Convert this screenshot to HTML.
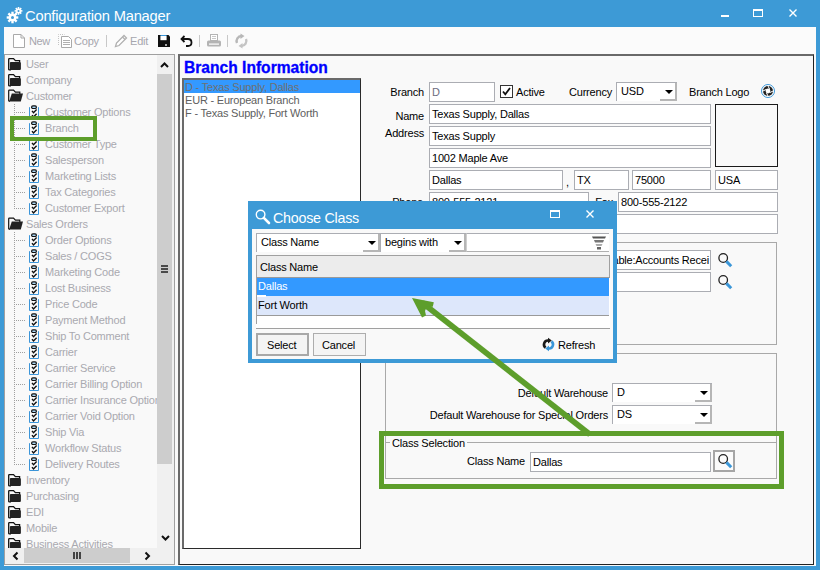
<!DOCTYPE html>
<html><head><meta charset="utf-8">
<style>
*{margin:0;padding:0;box-sizing:border-box}
html,body{width:820px;height:570px;overflow:hidden}
body{position:relative;background:#3d9ad6;font-family:"Liberation Sans",sans-serif;font-size:11px;color:#000;letter-spacing:-0.2px}
.a{position:absolute}
.t{position:absolute;white-space:nowrap;line-height:16px}
svg{position:absolute;overflow:visible}
.tree .t{color:#a9a9b0}
.inp{position:absolute;background:#fff;border:1px solid #abadb3}
.inp span{position:absolute;left:2px;top:1px;line-height:16px;white-space:nowrap;color:#000}
.lbl{position:absolute;white-space:nowrap;line-height:16px}
.cmb{position:absolute;background:#fff;border-top:1px solid #abadb3;border-left:1px solid #abadb3}
.cmb span{position:absolute;left:4px;top:0px;line-height:16px;white-space:nowrap}
.cmb i{position:absolute;right:0;top:0;width:17px;bottom:0;border-right:2px solid #b6b6b6;border-bottom:2px solid #b6b6b6}
.cmb i:after{content:"";position:absolute;left:4.5px;top:6.5px;border-left:4px solid transparent;border-right:4px solid transparent;border-top:4.5px solid #000}
.tb{position:absolute;white-space:nowrap;line-height:16px;color:#a6a6ae;font-size:12px}
</style></head><body>
<svg width="0" height="0" style="position:absolute">
<defs>
<symbol id="fc" viewBox="0 0 16 16">
  <path d="M0.7 13.2V3.2Q0.7 2.6 1.3 2.6H5.5L7.4 4.6H11.6V6" fill="none" stroke="#111" stroke-width="1.3"/>
  <rect x="1.9" y="5.9" width="11" height="8" rx="1" fill="#222"/>
  <path d="M0.7 13V13.3Q0.7 13.9 1.5 13.9H3" stroke="#111" stroke-width="1.3" fill="none"/>
</symbol>
<symbol id="fo" viewBox="0 0 16 16">
  <path d="M0.7 13.2V2.8Q0.7 2.2 1.3 2.2H5.5L7.4 4.2H11.8V6M0.7 13.2H2" fill="none" stroke="#111" stroke-width="1.2"/>
  <path d="M3.8 5.6H15L12.8 13.6H1.2Z" fill="#222"/>
</symbol>
<symbol id="cb" viewBox="0 0 11 16">
  <path d="M0.5 3.2V14.5H9.5V3.2" fill="none" stroke="#3b95d9" stroke-width="1"/>
  <rect x="2.6" y="1.9" width="4.8" height="2.6" rx="1.3" fill="#a8d4f2" stroke="#111" stroke-width="1.2"/>
  <path d="M3 6.9L4.5 8.7L7.6 5.6M3 11.1L4.5 12.9L7.6 9.8" fill="none" stroke="#111" stroke-width="1.4"/>
</symbol>
<symbol id="mag" viewBox="0 0 16 16">
  <circle cx="5.2" cy="5" r="4.3" fill="none" stroke="#222" stroke-width="1.3"/>
  <path d="M8.4 8.4L13.2 13.2" stroke="#3a96d8" stroke-width="3"/>
</symbol>
</defs></svg>
<!-- title bar -->
<svg style="left:7px;top:7px" width="16" height="17" viewBox="0 0 16 17">
  <g fill="#fff">
    <circle cx="5.5" cy="10.5" r="3.8"/>
    <g transform="translate(5.5 10.5)">
      <rect x="-1.2" y="-5.8" width="2.4" height="11.6"/>
      <rect x="-1.2" y="-5.8" width="2.4" height="11.6" transform="rotate(45)"/>
      <rect x="-1.2" y="-5.8" width="2.4" height="11.6" transform="rotate(90)"/>
      <rect x="-1.2" y="-5.8" width="2.4" height="11.6" transform="rotate(135)"/>
    </g>
    <circle cx="11.5" cy="3.9" r="2.5"/>
    <g transform="translate(11.5 3.9)">
      <rect x="-0.8" y="-3.9" width="1.6" height="7.8"/>
      <rect x="-0.8" y="-3.9" width="1.6" height="7.8" transform="rotate(45)"/>
      <rect x="-0.8" y="-3.9" width="1.6" height="7.8" transform="rotate(90)"/>
      <rect x="-0.8" y="-3.9" width="1.6" height="7.8" transform="rotate(135)"/>
    </g>
  </g>
  <circle cx="5.5" cy="10.5" r="1.5" fill="#3d9ad6"/>
  <circle cx="11.5" cy="3.9" r="1" fill="#3d9ad6"/>
</svg>
<div class="t" style="left:25px;top:7px;font-size:14.7px;line-height:19px;color:#fff;letter-spacing:-0.2px">Configuration Manager</div>
<div class="a" style="left:721px;top:15px;width:8px;height:2px;background:#fff"></div>
<div class="a" style="left:753px;top:9px;width:10px;height:8px;border:1px solid #fff;border-top-width:2px"></div>
<svg style="left:789px;top:9px" width="8" height="8" viewBox="0 0 8 8"><path d="M0.5 0.5L7.5 7.5M7.5 0.5L0.5 7.5" stroke="#fff" stroke-width="1.4"/></svg>

<!-- client -->
<div class="a" style="left:4px;top:27px;width:812px;height:539px;background:#f9f9f9"></div>
<!-- toolbar -->
<div class="a" style="left:4px;top:27px;width:812px;height:27px;background:#fbfbfb"></div>
<svg style="left:13px;top:34px" width="12" height="14" viewBox="0 0 12 14"><path d="M0.5 0.5H8L11.5 4V13.5H0.5Z" fill="#fff" stroke="#a9a9a9"/><path d="M8 0.5V4H11.5" fill="none" stroke="#a9a9a9"/></svg>
<div class="tb" style="left:29px;top:33px;font-size:11px;letter-spacing:-0.4px">New</div>
<svg style="left:58px;top:34px" width="15" height="15" viewBox="0 0 15 15"><path d="M0.5 11V0.5H6.5" fill="none" stroke="#c4c4c4" stroke-dasharray="1 1"/><path d="M3.5 2.5H10.5L13.5 5.5V13.5H3.5Z" fill="#fff" stroke="#a9a9a9"/><path d="M5 6.5H12M5 8.5H12M5 10.5H12" stroke="#b0b0b0"/></svg>
<div class="tb" style="left:74px;top:33px;font-size:11px;letter-spacing:-0.2px">Copy</div>
<div class="a" style="left:106px;top:35px;width:1px;height:12px;background:#c8c8c8"></div>
<svg style="left:114px;top:34px" width="14" height="14" viewBox="0 0 14 14"><path d="M1.5 12.5L2.5 9L10 1.5L12.5 4L5 11.5Z" fill="#fff" stroke="#b0b0b0" stroke-width="1.3"/><path d="M8.5 3L11 5.5" stroke="#b0b0b0" stroke-width="1.2"/></svg>
<div class="tb" style="left:130px;top:33px;font-size:11px;letter-spacing:-0.2px">Edit</div>
<svg style="left:158px;top:35px" width="12" height="12" viewBox="0 0 12 12"><path d="M0 0H10.5L12 1.5V12H0Z" fill="#111"/><rect x="2.4" y="1" width="6.2" height="4.2" fill="#fff"/><rect x="2.4" y="0" width="6.2" height="1" fill="#3a96d8"/><rect x="7.2" y="9.2" width="1.6" height="1.6" fill="#fff"/></svg>
<svg style="left:180px;top:35px" width="13" height="12" viewBox="0 0 13 12"><path d="M4.5 1L1.5 4L4.5 7" fill="none" stroke="#111" stroke-width="1.8"/><path d="M1.8 4H8Q11.5 4 11.5 7.5Q11.5 11 8 11H6" fill="none" stroke="#111" stroke-width="1.8"/></svg>
<div class="a" style="left:199px;top:35px;width:1px;height:12px;background:#c8c8c8"></div>
<svg style="left:207px;top:34px" width="14" height="14" viewBox="0 0 14 14"><rect x="3.5" y="0.5" width="7" height="6" fill="#fff" stroke="#b4b4b4"/><path d="M5 2.5H9M5 4.5H9" stroke="#c8c8c8"/><rect x="0" y="6.5" width="14" height="6" rx="1.5" fill="#b4b4b4"/><rect x="2" y="9.5" width="10" height="1.2" fill="#fff"/></svg>
<div class="a" style="left:227px;top:35px;width:1px;height:12px;background:#c8c8c8"></div>
<svg style="left:235px;top:34px" width="13" height="14" viewBox="0 0 13 14"><path d="M6.5 2A5 5 0 0 0 2 9" fill="none" stroke="#b8b8b8" stroke-width="2.4"/><path d="M6.5 12A5 5 0 0 0 11 5" fill="none" stroke="#c4c4c4" stroke-width="2.4"/><path d="M5.5 -0.5L9.5 2L5.5 5Z" fill="#b8b8b8"/><path d="M7.5 14.5L3.5 12L7.5 9Z" fill="#c4c4c4"/></svg>

<!-- tree panel -->
<div class="a" style="left:4px;top:54px;width:171px;height:511px;border:1px solid #a0a0a0;background:#f9f9f9"></div>
<div class="tree">
<div class="a" style="left:14px;top:232px;width:1px;height:233px;background:repeating-linear-gradient(#a0a0a0 0 1px,transparent 1px 2px)"></div>
<div class="a" style="left:14px;top:104px;width:1px;height:105px;background:repeating-linear-gradient(#a0a0a0 0 1px,transparent 1px 2px)"></div>
<svg style="left:8px;top:56px" width="16" height="16"><use href="#fc"/></svg>
<div class="t" style="left:26px;top:56px">User</div>
<svg style="left:8px;top:72px" width="16" height="16"><use href="#fc"/></svg>
<div class="t" style="left:26px;top:72px">Company</div>
<svg style="left:8px;top:88px" width="16" height="16"><use href="#fo"/></svg>
<div class="t" style="left:26px;top:88px">Customer</div>
<div class="a" style="left:16px;top:112px;width:9px;height:1px;background:repeating-linear-gradient(90deg,#a0a0a0 0 1px,transparent 1px 2px)"></div>
<svg style="left:29px;top:104px" width="11" height="16"><use href="#cb"/></svg>
<div class="t" style="left:45px;top:104px">Customer Options</div>
<div class="a" style="left:16px;top:128px;width:9px;height:1px;background:repeating-linear-gradient(90deg,#a0a0a0 0 1px,transparent 1px 2px)"></div>
<svg style="left:29px;top:120px" width="11" height="16"><use href="#cb"/></svg>
<div class="t" style="left:45px;top:120px">Branch</div>
<div class="a" style="left:16px;top:144px;width:9px;height:1px;background:repeating-linear-gradient(90deg,#a0a0a0 0 1px,transparent 1px 2px)"></div>
<svg style="left:29px;top:136px" width="11" height="16"><use href="#cb"/></svg>
<div class="t" style="left:45px;top:136px">Customer Type</div>
<div class="a" style="left:16px;top:160px;width:9px;height:1px;background:repeating-linear-gradient(90deg,#a0a0a0 0 1px,transparent 1px 2px)"></div>
<svg style="left:29px;top:152px" width="11" height="16"><use href="#cb"/></svg>
<div class="t" style="left:45px;top:152px">Salesperson</div>
<div class="a" style="left:16px;top:176px;width:9px;height:1px;background:repeating-linear-gradient(90deg,#a0a0a0 0 1px,transparent 1px 2px)"></div>
<svg style="left:29px;top:168px" width="11" height="16"><use href="#cb"/></svg>
<div class="t" style="left:45px;top:168px">Marketing Lists</div>
<div class="a" style="left:16px;top:192px;width:9px;height:1px;background:repeating-linear-gradient(90deg,#a0a0a0 0 1px,transparent 1px 2px)"></div>
<svg style="left:29px;top:184px" width="11" height="16"><use href="#cb"/></svg>
<div class="t" style="left:45px;top:184px">Tax Categories</div>
<div class="a" style="left:16px;top:208px;width:9px;height:1px;background:repeating-linear-gradient(90deg,#a0a0a0 0 1px,transparent 1px 2px)"></div>
<svg style="left:29px;top:200px" width="11" height="16"><use href="#cb"/></svg>
<div class="t" style="left:45px;top:200px">Customer Export</div>
<svg style="left:8px;top:216px" width="16" height="16"><use href="#fo"/></svg>
<div class="t" style="left:26px;top:216px">Sales Orders</div>
<div class="a" style="left:16px;top:240px;width:9px;height:1px;background:repeating-linear-gradient(90deg,#a0a0a0 0 1px,transparent 1px 2px)"></div>
<svg style="left:29px;top:232px" width="11" height="16"><use href="#cb"/></svg>
<div class="t" style="left:45px;top:232px">Order Options</div>
<div class="a" style="left:16px;top:256px;width:9px;height:1px;background:repeating-linear-gradient(90deg,#a0a0a0 0 1px,transparent 1px 2px)"></div>
<svg style="left:29px;top:248px" width="11" height="16"><use href="#cb"/></svg>
<div class="t" style="left:45px;top:248px">Sales / COGS</div>
<div class="a" style="left:16px;top:272px;width:9px;height:1px;background:repeating-linear-gradient(90deg,#a0a0a0 0 1px,transparent 1px 2px)"></div>
<svg style="left:29px;top:264px" width="11" height="16"><use href="#cb"/></svg>
<div class="t" style="left:45px;top:264px">Marketing Code</div>
<div class="a" style="left:16px;top:288px;width:9px;height:1px;background:repeating-linear-gradient(90deg,#a0a0a0 0 1px,transparent 1px 2px)"></div>
<svg style="left:29px;top:280px" width="11" height="16"><use href="#cb"/></svg>
<div class="t" style="left:45px;top:280px">Lost Business</div>
<div class="a" style="left:16px;top:304px;width:9px;height:1px;background:repeating-linear-gradient(90deg,#a0a0a0 0 1px,transparent 1px 2px)"></div>
<svg style="left:29px;top:296px" width="11" height="16"><use href="#cb"/></svg>
<div class="t" style="left:45px;top:296px">Price Code</div>
<div class="a" style="left:16px;top:320px;width:9px;height:1px;background:repeating-linear-gradient(90deg,#a0a0a0 0 1px,transparent 1px 2px)"></div>
<svg style="left:29px;top:312px" width="11" height="16"><use href="#cb"/></svg>
<div class="t" style="left:45px;top:312px">Payment Method</div>
<div class="a" style="left:16px;top:336px;width:9px;height:1px;background:repeating-linear-gradient(90deg,#a0a0a0 0 1px,transparent 1px 2px)"></div>
<svg style="left:29px;top:328px" width="11" height="16"><use href="#cb"/></svg>
<div class="t" style="left:45px;top:328px">Ship To Comment</div>
<div class="a" style="left:16px;top:352px;width:9px;height:1px;background:repeating-linear-gradient(90deg,#a0a0a0 0 1px,transparent 1px 2px)"></div>
<svg style="left:29px;top:344px" width="11" height="16"><use href="#cb"/></svg>
<div class="t" style="left:45px;top:344px">Carrier</div>
<div class="a" style="left:16px;top:368px;width:9px;height:1px;background:repeating-linear-gradient(90deg,#a0a0a0 0 1px,transparent 1px 2px)"></div>
<svg style="left:29px;top:360px" width="11" height="16"><use href="#cb"/></svg>
<div class="t" style="left:45px;top:360px">Carrier Service</div>
<div class="a" style="left:16px;top:384px;width:9px;height:1px;background:repeating-linear-gradient(90deg,#a0a0a0 0 1px,transparent 1px 2px)"></div>
<svg style="left:29px;top:376px" width="11" height="16"><use href="#cb"/></svg>
<div class="t" style="left:45px;top:376px">Carrier Billing Option</div>
<div class="a" style="left:16px;top:400px;width:9px;height:1px;background:repeating-linear-gradient(90deg,#a0a0a0 0 1px,transparent 1px 2px)"></div>
<svg style="left:29px;top:392px" width="11" height="16"><use href="#cb"/></svg>
<div class="t" style="left:45px;top:392px">Carrier Insurance Option</div>
<div class="a" style="left:16px;top:416px;width:9px;height:1px;background:repeating-linear-gradient(90deg,#a0a0a0 0 1px,transparent 1px 2px)"></div>
<svg style="left:29px;top:408px" width="11" height="16"><use href="#cb"/></svg>
<div class="t" style="left:45px;top:408px">Carrier Void Option</div>
<div class="a" style="left:16px;top:432px;width:9px;height:1px;background:repeating-linear-gradient(90deg,#a0a0a0 0 1px,transparent 1px 2px)"></div>
<svg style="left:29px;top:424px" width="11" height="16"><use href="#cb"/></svg>
<div class="t" style="left:45px;top:424px">Ship Via</div>
<div class="a" style="left:16px;top:448px;width:9px;height:1px;background:repeating-linear-gradient(90deg,#a0a0a0 0 1px,transparent 1px 2px)"></div>
<svg style="left:29px;top:440px" width="11" height="16"><use href="#cb"/></svg>
<div class="t" style="left:45px;top:440px">Workflow Status</div>
<div class="a" style="left:16px;top:464px;width:9px;height:1px;background:repeating-linear-gradient(90deg,#a0a0a0 0 1px,transparent 1px 2px)"></div>
<svg style="left:29px;top:456px" width="11" height="16"><use href="#cb"/></svg>
<div class="t" style="left:45px;top:456px">Delivery Routes</div>
<svg style="left:8px;top:472px" width="16" height="16"><use href="#fc"/></svg>
<div class="t" style="left:26px;top:472px">Inventory</div>
<svg style="left:8px;top:488px" width="16" height="16"><use href="#fc"/></svg>
<div class="t" style="left:26px;top:488px">Purchasing</div>
<svg style="left:8px;top:504px" width="16" height="16"><use href="#fc"/></svg>
<div class="t" style="left:26px;top:504px">EDI</div>
<svg style="left:8px;top:520px" width="16" height="16"><use href="#fc"/></svg>
<div class="t" style="left:26px;top:520px">Mobile</div>
<svg style="left:8px;top:536px" width="16" height="16"><use href="#fc"/></svg>
<div class="t" style="left:26px;top:536px">Business Activities</div></div>
<!-- tree vertical scrollbar -->
<div class="a" style="left:157px;top:55px;width:17px;height:493px;background:#f0f0f0"></div>
<div class="a" style="left:157px;top:74px;width:15px;height:390px;background:#cdcdcd"></div>
<svg style="left:160px;top:62px" width="9" height="6" viewBox="0 0 9 6"><path d="M1 5L4.5 1.5L8 5" fill="none" stroke="#111" stroke-width="2"/></svg>
<svg style="left:161px;top:535px" width="9" height="6" viewBox="0 0 9 6"><path d="M1 1L4.5 4.5L8 1" fill="none" stroke="#111" stroke-width="2"/></svg>
<!-- tree h scrollbar -->
<div class="a" style="left:5px;top:548px;width:169px;height:16px;background:#f0f0f0"></div>
<div class="a" style="left:24px;top:548px;width:106px;height:15px;background:#cdcdcd"></div>
<svg style="left:12px;top:552px" width="7" height="8" viewBox="0 0 7 8"><path d="M5.5 0.5L2 4L5.5 7.5" fill="none" stroke="#111" stroke-width="2"/></svg>
<svg style="left:144px;top:552px" width="7" height="8" viewBox="0 0 7 8"><path d="M1.5 0.5L5 4L1.5 7.5" fill="none" stroke="#111" stroke-width="2"/></svg>
<div class="a" style="left:73px;top:552px;width:2px;height:7px;background:#444"></div>
<div class="a" style="left:76px;top:552px;width:2px;height:7px;background:#444"></div>
<div class="a" style="left:79px;top:552px;width:2px;height:7px;background:#444"></div>
<!-- scrollbar grip on v thumb -->
<div class="a" style="left:161px;top:265px;width:7px;height:2px;background:#4a4a4a"></div>
<div class="a" style="left:161px;top:268px;width:7px;height:2px;background:#4a4a4a"></div>
<div class="a" style="left:161px;top:271px;width:7px;height:2px;background:#4a4a4a"></div>
<div class="a" style="left:156px;top:548px;width:18px;height:16px;background:#f0f0f0"></div>

<!-- content panel -->
<div class="a" style="left:178px;top:54px;width:636px;height:511px;border:1px solid #222;border-top:2px solid #6a6a6a;border-left:2px solid #6a6a6a;background:#f9f9f9"></div>
<div class="t" style="left:184px;top:59px;font-size:15.6px;line-height:18px;font-weight:bold;color:#0000ff;letter-spacing:0;-webkit-text-stroke:0.3px #0000ff">Branch Information</div>
<!-- list box -->
<div class="a" style="left:182px;top:78px;width:179px;height:471px;border:1px solid #2a2a2a;border-top:2px solid #6a6a6a;border-left:2px solid #6a6a6a;background:#fff"></div>
<div class="a" style="left:184px;top:80px;width:176px;height:13px;background:#3399ff"></div>
<div class="t" style="left:185px;top:79px;color:#707070">D - Texas Supply, Dallas</div>
<div class="t" style="left:185px;top:92px;color:#606060">EUR - European Branch</div>
<div class="t" style="left:185px;top:105px;color:#606060">F - Texas Supply, Fort Worth</div>
<!-- form -->
<div class="lbl" style="right:396px;top:84px">Branch</div>
<div class="inp" style="left:429px;top:82px;width:66px;height:20px"><span style="color:#6d6d80">D</span></div>
<div class="a" style="left:500px;top:85px;width:13px;height:13px;border:1px solid #333;background:#fff"></div>
<svg style="left:502px;top:87px" width="9" height="9" viewBox="0 0 9 9"><path d="M1 4.5L3.3 7.3L8 1" fill="none" stroke="#111" stroke-width="1.8"/></svg>
<div class="lbl" style="left:516px;top:84px">Active</div>
<div class="lbl" style="right:208px;top:84px">Currency</div>
<div class="cmb" style="left:616px;top:82px;width:61px;height:19px"><span>USD</span><i></i></div>
<div class="lbl" style="left:689px;top:84px">Branch Logo</div>
<svg style="left:761px;top:84px" width="14" height="14" viewBox="0 0 14 14"><circle cx="7" cy="7" r="6.5" fill="#fff" stroke="#3a96d8" stroke-width="1"/><circle cx="7" cy="7" r="5" fill="#222"/><circle cx="7" cy="7" r="2.4" fill="#fff"/><path d="M7 2L8.5 5M12 7L9 8.5M7 12L5.5 9M2 7L5 5.5" stroke="#fff" stroke-width="1"/></svg>

<div class="lbl" style="right:396px;top:108px">Name</div>
<div class="inp" style="left:429px;top:104px;width:282px;height:20px"><span>Texas Supply, Dallas</span></div>
<div class="lbl" style="right:396px;top:125px">Address</div>
<div class="inp" style="left:429px;top:126px;width:282px;height:20px"><span>Texas Supply</span></div>
<div class="inp" style="left:429px;top:148px;width:282px;height:20px"><span>1002 Maple Ave</span></div>
<div class="inp" style="left:429px;top:170px;width:134px;height:20px"><span>Dallas</span></div>
<div class="lbl" style="left:566px;top:174px">,</div>
<div class="inp" style="left:574px;top:170px;width:55px;height:20px"><span>TX</span></div>
<div class="inp" style="left:632px;top:170px;width:79px;height:20px"><span>75000</span></div>
<div class="inp" style="left:715px;top:170px;width:63px;height:20px"><span>USA</span></div>
<div class="a" style="left:715px;top:104px;width:63px;height:63px;border:1px solid #1a1a1a;background:#f9f9f9"></div>

<div class="lbl" style="right:397px;top:194px">Phone</div>
<div class="inp" style="left:429px;top:192px;width:160px;height:20px"><span>800-555-2121</span></div>
<div class="lbl" style="right:207px;top:194px">Fax</div>
<div class="inp" style="left:618px;top:192px;width:160px;height:20px"><span>800-555-2122</span></div>
<div class="inp" style="left:429px;top:214px;width:349px;height:20px"></div>

<!-- group box 1 -->
<div class="a" style="left:385px;top:242px;width:392px;height:103px;border:1px solid #a9a9a9"></div>
<div class="inp" style="left:560px;top:250px;width:151px;height:20px;overflow:hidden"><span style="left:auto;right:1px">Receivable:Accounts Recei</span></div>
<svg style="left:718px;top:253px" width="16" height="16"><use href="#mag"/></svg>
<div class="inp" style="left:560px;top:272px;width:151px;height:20px"></div>
<svg style="left:718px;top:275px" width="16" height="16"><use href="#mag"/></svg>

<!-- group box 2 -->
<div class="a" style="left:385px;top:353px;width:392px;height:126px;border:1px solid #a9a9a9"></div>
<div class="lbl" style="right:212px;top:385px">Default Warehouse</div>
<div class="cmb" style="left:612px;top:383px;width:100px;height:19px"><span>D</span><i></i></div>
<div class="lbl" style="right:212px;top:407px">Default Warehouse for Special Orders</div>
<div class="cmb" style="left:612px;top:405px;width:100px;height:19px"><span>DS</span><i></i></div>

<!-- Class selection group -->
<div class="a" style="left:385px;top:442px;width:392px;height:37px;border:1px solid #a9a9a9"></div>
<div class="lbl" style="left:390px;top:435px;padding:0 2px;background:#f9f9f9">Class Selection</div>
<div class="lbl" style="right:295px;top:453px">Class Name</div>
<div class="inp" style="left:530px;top:452px;width:181px;height:20px"><span>Dallas</span></div>
<div class="a" style="left:713px;top:450px;width:22px;height:22px;border:2px solid #a6a6a6;background:#fbfbfb"></div>
<svg style="left:718px;top:454px" width="16" height="16"><use href="#mag"/></svg>
<!-- dialog -->
<div class="a" style="left:248px;top:201px;width:369px;height:162px;background:#3d9ad6"></div>
<div class="a" style="left:252px;top:229px;width:361px;height:130px;background:#f9f9f9"></div>
<svg style="left:255px;top:209px" width="16" height="16" viewBox="0 0 16 16"><circle cx="5.6" cy="5.6" r="4.3" fill="none" stroke="#fff" stroke-width="1.4"/><path d="M8.8 8.8L14 14" stroke="#fff" stroke-width="2.6" stroke-linecap="round"/></svg>
<div class="t" style="left:273px;top:209px;font-size:14.3px;line-height:18px;color:#fff;letter-spacing:-0.25px">Choose Class</div>
<div class="a" style="left:550px;top:210px;width:10px;height:8px;border:1px solid #fff;border-top-width:2px"></div>
<svg style="left:586px;top:210px" width="8" height="8" viewBox="0 0 8 8"><path d="M0.5 0.5L7.5 7.5M7.5 0.5L0.5 7.5" stroke="#fff" stroke-width="1.4"/></svg>
<div class="cmb" style="left:256px;top:233px;width:124px;height:19px"><span style="left:4px">Class Name</span><i></i></div>
<div class="cmb" style="left:380px;top:233px;width:86px;height:19px"><span>begins with</span><i></i></div>
<div class="a" style="left:466px;top:233px;width:143px;height:19px;background:#fff;border-top:1px solid #abadb3;border-bottom:1px solid #b0b0b0;border-left:1px solid #cfcfcf"></div>
<svg style="left:592px;top:236px" width="14" height="14" viewBox="0 0 14 14"><path d="M0 0.5H14L13 2.5H1Z" fill="#555"/><path d="M2 4H12L11 6.5H3Z" fill="#777"/><path d="M3.5 8H10.5L9.5 10H4.5Z" fill="#aaa"/><path d="M5 11H9V13.5H5Z" fill="#666"/></svg>
<!-- grid -->
<div class="a" style="left:256px;top:255px;width:354px;height:73px;background:#fff"></div><div class="a" style="left:256px;top:255px;width:1px;height:69px;background:#a0a0a0"></div>
<div class="a" style="left:256px;top:255px;width:354px;height:23px;background:#ececec;border:1px solid #a0a0a0;border-bottom-color:#9a9a9a"></div>
<div class="t" style="left:260px;top:259px">Class Name</div>
<div class="a" style="left:257px;top:278px;width:352px;height:18px;background:#3399ff"></div>
<div class="t" style="left:258px;top:278px;color:#fff">Dallas</div>
<div class="a" style="left:257px;top:296px;width:352px;height:20px;background:#dde7fb;border-bottom:1px solid #9a9a9a"></div>
<div class="t" style="left:258px;top:297px">Fort Worth</div>
<div class="a" style="left:257px;top:295px;width:9px;height:2px;background:#fff"></div>
<div class="a" style="left:256px;top:328px;width:354px;height:1px;background:#a0a0a0"></div>
<!-- buttons -->
<div class="a" style="left:256px;top:333px;width:53px;height:23px;border:2px solid #a8a8a8;background:#f4f4f4"></div>
<div class="t" style="left:267px;top:337px">Select</div>
<div class="a" style="left:313px;top:333px;width:53px;height:23px;border:1px solid #adadad;background:#f4f4f4"></div>
<div class="t" style="left:322px;top:337px">Cancel</div>
<svg style="left:542px;top:338px" width="13" height="13" viewBox="0 0 13 13"><path d="M6.5 2.6A3.9 3.9 0 0 0 3.6 9.6" fill="none" stroke="#1a1a1a" stroke-width="2.6"/><path d="M6 -0.2L9.8 2.6L6 5.4Z" fill="#1a1a1a"/><path d="M6.5 10.4A3.9 3.9 0 0 0 9.4 3.4" fill="none" stroke="#3a96d8" stroke-width="2.6"/><path d="M7 7.6L3.2 10.4L7 13.2Z" fill="#3a96d8"/></svg>
<div class="t" style="left:558px;top:337px">Refresh</div>

<!-- annotations -->
<div class="a" style="left:10px;top:116px;width:87px;height:25px;border:4.5px solid #5d9e2b"></div>
<div class="a" style="left:379px;top:431px;width:405px;height:58px;border:5px solid #5d9e2b"></div>
<svg style="left:0;top:0" width="820" height="570" viewBox="0 0 820 570"><path d="M590 434.5L422 302.5" stroke="#5d9e2b" stroke-width="5.8"/><path d="M412 298L433.8 302.3L432.8 306.8L427 306.2L425 311L426 315.6L422 317.4Z" fill="#5d9e2b"/></svg>
</body></html>
